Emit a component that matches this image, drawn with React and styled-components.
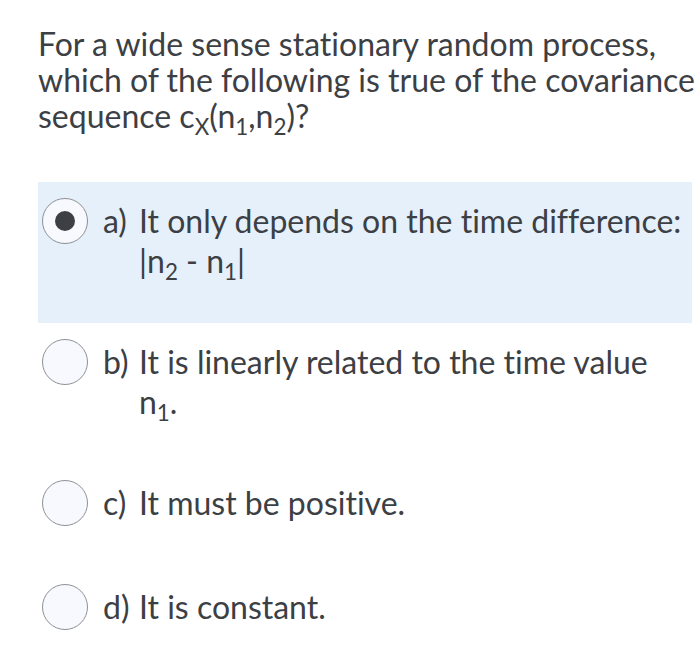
import React from "react";
import styled, { createGlobalStyle } from "styled-components";

const GlobalStyle = createGlobalStyle`
  body {
    margin: 0;
    background: #ffffff;
    font-family: Lato, "Liberation Sans", sans-serif;
    font-variant-ligatures: none;
    color: #3c4044;
  }
`;

const Page = styled.div`
  width: 698px;
  padding: 26px 0 0 38px;
  box-sizing: border-box;
`;

const Question = styled.p`
  margin: 0 0 48px;
  font-size: 32px;
  line-height: 36px;
`;

const Sub = styled.sub`
  font-size: 0.7em;
  line-height: 0;
  vertical-align: -0.32em;
`;

const OptionList = styled.div`
  display: flex;
  flex-direction: column;
  margin-right: 6px;
`;

const Option = styled.label`
  display: flex;
  align-items: flex-start;
  padding: 19px 0 42px 4px;
  background: ${(p) => (p.selected ? "#e5f0fb" : "transparent")};
  font-size: 32px;
  line-height: 40px;
`;

const Radio = styled.span`
  flex: none;
  width: 46px;
  height: 46px;
  margin: -3px 15px 0 0;
  box-sizing: border-box;
  border: 1px solid #8d9095;
  border-radius: 50%;
  background: #f8f9fe;
  display: flex;
  align-items: center;
  justify-content: center;
`;

const Dot = styled.span`
  width: 20px;
  height: 20px;
  border-radius: 50%;
  background: #3c4044;
`;

const Letter = styled.span`
  flex: none;
  width: 36px;
`;

const Text = styled.span`
  flex: 1;
`;

const options = [
  {
    key: "a)",
    selected: true,
    text: (
      <>
        It only depends on the time difference:
        <br />|n<Sub>2</Sub> - n<Sub>1</Sub>|
      </>
    ),
  },
  {
    key: "b)",
    text: (
      <>
        It is linearly related to the time value
        <br />n<Sub>1</Sub>.
      </>
    ),
  },
  { key: "c)", text: "It must be positive." },
  { key: "d)", text: "It is constant." },
];

export default function App() {
  return (
    <>
      <GlobalStyle />
      <Page>
        <Question>
          For a wide sense stationary random process, which of the following is
          true of the covariance sequence c<Sub>X</Sub>(n<Sub>1</Sub>,n
          <Sub>2</Sub>)?
        </Question>
        <OptionList>
          {options.map((o) => (
            <Option key={o.key} selected={o.selected}>
              <Radio>{o.selected && <Dot />}</Radio>
              <Letter>{o.key}</Letter>
              <Text>{o.text}</Text>
            </Option>
          ))}
        </OptionList>
      </Page>
    </>
  );
}
